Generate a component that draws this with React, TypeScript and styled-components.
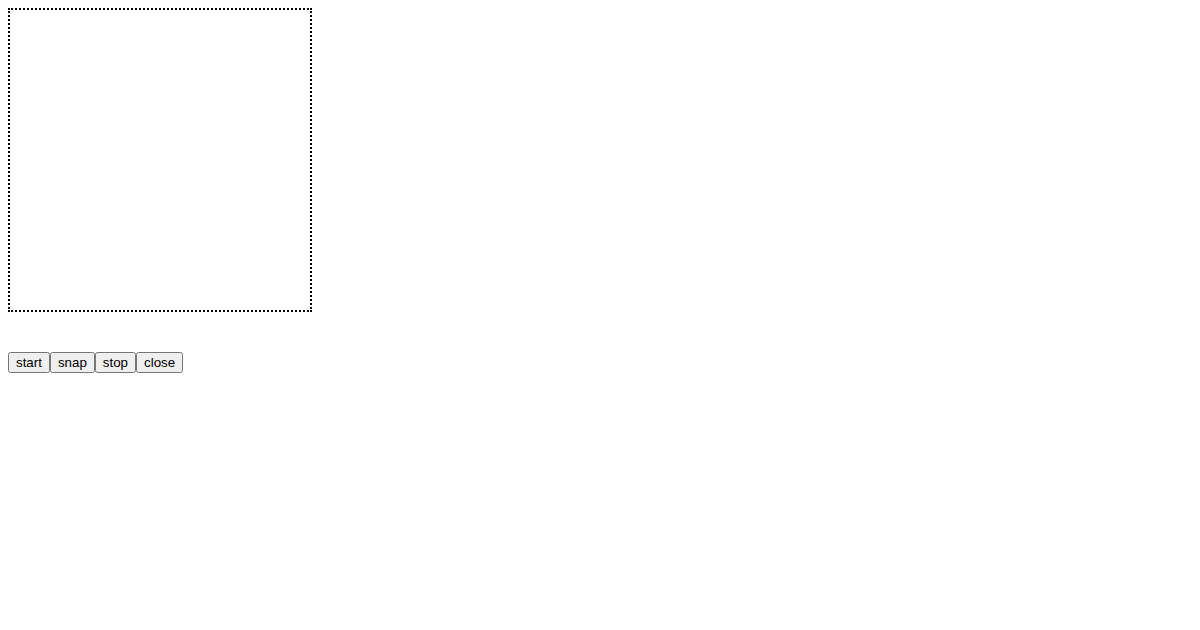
import React from 'react';
import styled, { createGlobalStyle } from 'styled-components';

const Global = createGlobalStyle`
  body {
    margin: 8px;
    font-family: "Liberation Sans", Arial, sans-serif;
    background: #fff;
  }
`;

const labels = ['start', 'snap', 'stop', 'close'];

export default () => (
  <>
    <Global />
    <Page>
      <Frame />
      <Controls>
        {labels.map((l) => (
          <Button key={l}>{l}</Button>
        ))}
      </Controls>
    </Page>
  </>
);

const Page = styled.div`
  display: flex;
  flex-direction: column;
  align-items: flex-start;
`;

const Frame = styled.div`
  width: 300px;
  height: 300px;
  border: 2px dotted #000;
  margin-bottom: 40px;
`;

const Controls = styled.div`
  display: flex;
`;

const Button = styled.button`
  font-family: "Liberation Sans", Arial, sans-serif;
  font-size: 13.333px;
  margin: 0;
`;
